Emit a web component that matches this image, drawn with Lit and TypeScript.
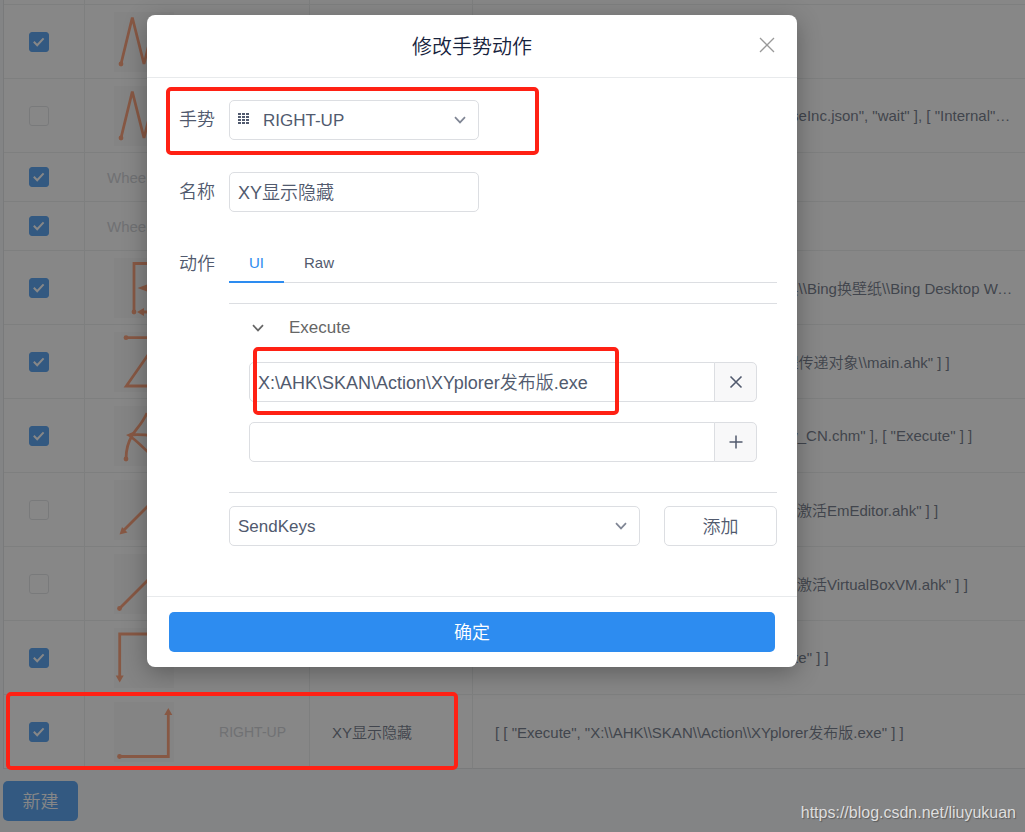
import { LitElement, html, svg, css, nothing } from "lit";
import { customElement, property } from "lit/decorators.js";

interface GestureRow {
  on: boolean;
  shape?: string;
  gesture?: string;
  name?: string;
  action: string;
}

const rows: GestureRow[] = [
  { on: true, shape: "zigzag", action: "" },
  {
    on: false,
    shape: "zigzag",
    action: '[ [ "Execute", "D:\\\\Tools\\\\AutoHotkey\\\\DatabaseInc.json", "wait" ], [ "Internal"…',
  },
  { on: true, gesture: "WheelUp", action: "" },
  { on: true, gesture: "WheelDown", action: "" },
  {
    on: true,
    shape: "hook",
    action: '[ [ "Execute", "D:\\\\AutoHotkey\\\\Scripts\\\\小工具\\\\Bing换壁纸\\\\Bing Desktop Wallpaper.exe" ] ]',
  },
  { on: true, shape: "zed", action: '[ [ "Execute", "D:\\\\AutoHotkey\\\\Scripts\\\\多进程传递对象\\\\main.ahk" ] ]' },
  {
    on: true,
    shape: "curve",
    action: '[ [ "Execute", "C:\\\\Tools\\\\v2\\\\Help\\\\AutoHotkey_CN.chm" ], [ "Execute" ] ]',
  },
  { on: false, shape: "downleft", action: '[ [ "Execute", "D:\\\\AutoHotkey\\\\Scripts\\\\Tools\\\\激活EmEditor.ahk" ] ]' },
  { on: false, shape: "upright", action: '[ [ "Execute", "D:\\\\AutoHotkey\\\\Scripts\\\\Tools\\\\激活VirtualBoxVM.ahk" ] ]' },
  { on: true, shape: "leftdown", action: '[ [ "Execute", "D:\\\\AutoHotkey\\\\Scripts\\\\Spy.exe" ] ]' },
  {
    on: true,
    shape: "rightup",
    gesture: "RIGHT-UP",
    name: "XY显示隐藏",
    action: '[ [ "Execute", "X:\\\\AHK\\\\SKAN\\\\Action\\\\XYplorer发布版.exe" ] ]',
  },
];

const shapes: Record<string, { line: string; dot?: [number, number]; head?: string }> = {
  zigzag: { line: "M7 52 18.3 5.5 30 52 41.5 5.5 53 52", dot: [7, 52] },
  hook: { line: "M20 54V5.500H46V30H32M46 54H28", dot: [20, 54], head: "M23.500 30 33 26.500V33.500ZM23 54 30 50V58Z" },
  zed: { line: "M12 5.700H46L12.300 54H49", dot: [12, 5.7] },
  curve: {
    line: "M12 53C12 46 14 36 18.500 29C22 23 28 18 33 7M16 29Q26 28 40 30M16 30Q24 36 40 52",
    dot: [12, 53],
    head: "M12 29 19 26V33Z",
  },
  downleft: { line: "M53 7 9 51", head: "M5.500 54.500 8 47 13.500 52.500Z" },
  upright: { line: "M5.500 54.500 53 7", dot: [5.5, 54.5] },
  leftdown: { line: "M54 6H5.700V49", head: "M5.700 54.500 1.700 47.500H9.700Z" },
  rightup: { line: "M5.500 54.500H54.300V12", dot: [5.5, 54.5], head: "M54.300 6 50.300 13H58.300Z" },
};

const chevron = html`<svg class="chevron" viewBox="0 0 12 8" width="12" height="8" aria-hidden="true">
  <path d="M1 1.200 6 6.400 11 1.200" fill="none" stroke="currentColor" stroke-width="1.700" />
</svg>`;

@customElement("gesture-table")
export class GestureTable extends LitElement {
  @property({ attribute: false }) rows: GestureRow[] = [];

  static styles = css`
    :host {
      display: block;
    }
    .grid {
      width: 100%;
      table-layout: fixed;
      border-collapse: separate;
      border-spacing: 0;
      border-left: 1px solid #dcdee2;
      background: #fff;
      font-size: 15px;
      color: #515a6e;
    }
    .pick {
      width: 81px;
    }
    .gesture {
      width: 225px;
    }
    .name {
      width: 163px;
    }
    th,
    td {
      box-sizing: border-box;
      padding: 0 6px 0 22px;
      text-align: left;
      font-weight: inherit;
      border-right: 1px solid #e8eaec;
      border-bottom: 1px solid #e8eaec;
      overflow: hidden;
      white-space: nowrap;
      text-overflow: ellipsis;
    }
    th {
      height: 5px;
    }
    td {
      height: 49px;
    }
    .tall td {
      height: 74px;
    }
    th:last-child,
    td:last-child {
      border-right: 0;
    }
    tr:last-child td {
      border-bottom-color: #dcdee2;
    }
    .check {
      display: grid;
      width: 20px;
      height: 20px;
      margin-left: 3px;
    }
    .check input,
    .check svg {
      grid-area: 1 / 1;
    }
    .check input {
      appearance: none;
      box-sizing: border-box;
      width: 20px;
      height: 20px;
      margin: 0;
      border: 1px solid #dcdee2;
      border-radius: 3px;
      background: #fff;
    }
    .check input:checked {
      border-color: #2d8cf0;
      background: #2d8cf0;
    }
    .check svg {
      visibility: hidden;
      pointer-events: none;
    }
    .check input:checked + svg {
      visibility: visible;
    }
    .trace {
      display: flex;
      align-items: center;
      justify-content: space-between;
      padding: 0 17px 0 7px;
    }
    .trace svg {
      display: block;
      background: #f8f8f8;
    }
    .faint {
      color: #c5c8ce;
    }
    .small {
      font-size: 14px;
    }
  `;

  private trace(id: string) {
    const s = shapes[id];
    return svg`<svg width="60" height="60" viewBox="0 0 60 60" aria-hidden="true">
      <path d=${s.line} fill="none" stroke="#ff8a58" stroke-width="2.800"></path>
      ${s.dot ? svg`<circle cx=${s.dot[0]} cy=${s.dot[1]} r="2.400" fill="#ff8a58"></circle>` : nothing}
      ${s.head ? svg`<path d=${s.head} fill="#ff8a58"></path>` : nothing}
    </svg>`;
  }

  render() {
    return html`<table class="grid">
      <thead>
        <tr>
          <th class="pick"></th>
          <th class="gesture"></th>
          <th class="name"></th>
          <th></th>
        </tr>
      </thead>
      <tbody>
        ${this.rows.map(
          (r) => html`<tr class=${r.shape ? "tall" : "slim"}>
            <td>
              <label class="check">
                <input type="checkbox" .checked=${r.on} aria-label="启用" />
                <svg width="20" height="20" viewBox="0 0 20 20" aria-hidden="true">
                  <path d="M4.800 9.800 8.200 13.200 14.600 6.400" fill="none" stroke="#fff" stroke-width="2"></path>
                </svg>
              </label>
            </td>
            <td>
              ${r.shape
                ? html`<div class="trace">${this.trace(r.shape)}<span class="faint small">${r.gesture ?? ""}</span></div>`
                : html`<span class="faint">${r.gesture}</span>`}
            </td>
            <td>${r.name ?? ""}</td>
            <td>${r.action}</td>
          </tr>`
        )}
      </tbody>
    </table>`;
  }
}

@customElement("gesture-dialog")
export class GestureDialog extends LitElement {
  static styles = css`
    :host {
      display: block;
      width: 650px;
      border-radius: 8px;
      background: #fff;
      color: #515a6e;
      font-size: 18px;
      box-shadow: 0 6px 24px rgba(0, 0, 0, 0.3);
    }
    * {
      box-sizing: border-box;
    }
    button,
    input,
    select {
      font: inherit;
      color: inherit;
      margin: 0;
    }
    .head {
      display: grid;
      grid-template-columns: 1fr auto 1fr;
      align-items: center;
      height: 63px;
      padding: 0 20px 2px;
      border-bottom: 1px solid #e8eaec;
    }
    .title {
      grid-column: 2;
      margin: 0;
      font-size: 20px;
      font-weight: inherit;
      color: #17233d;
    }
    .close {
      justify-self: end;
      display: grid;
      place-items: center;
      width: 20px;
      height: 20px;
      padding: 0;
      border: 0;
      background: none;
      color: #999;
    }
    .body {
      display: grid;
      gap: 32px;
      padding: 22px 20px 50px 32px;
    }
    .item {
      display: grid;
      grid-template-columns: 50px 1fr;
      align-items: start;
    }
    .label {
      line-height: 40px;
    }
    .field {
      width: 250px;
    }
    .box {
      width: 100%;
      height: 40px;
      padding: 0 8px 2px;
      border: 1px solid #dcdee2;
      border-radius: 5px;
      background: #fff;
      outline: none;
    }
    .select {
      display: grid;
      align-items: center;
      font-size: 17px;
    }
    .select > * {
      grid-area: 1 / 1;
    }
    .select .box {
      appearance: none;
      padding-bottom: 0;
    }
    .select .chevron {
      justify-self: end;
      margin-right: 13px;
      color: #808695;
      pointer-events: none;
    }
    .keypad {
      margin: 0 0 3px 9px;
      pointer-events: none;
    }
    .select .indent {
      padding-left: 33px;
    }
    .tabs {
      display: flex;
      height: 39px;
      border-bottom: 1px solid #dcdee2;
      font-size: 15px;
    }
    .tab {
      height: 39px;
      padding: 0 20px;
      border: 0;
      border-bottom: 2px solid transparent;
      background: none;
    }
    .active {
      color: #2d8cf0;
      border-bottom-color: #2d8cf0;
    }
    .panel {
      margin: 20px 0 13px;
      padding: 0 20px 30px;
      border-top: 1px solid #dcdee2;
      border-bottom: 1px solid #dcdee2;
    }
    .fold {
      display: flex;
      align-items: center;
      gap: 25px;
      width: 100%;
      height: 48px;
      padding: 0 3px;
      border: 0;
      background: none;
      color: #666;
      font-size: 17px;
    }
    .args {
      display: grid;
      gap: 20px;
      padding-top: 10px;
    }
    .arg {
      display: flex;
    }
    .arg .box {
      flex: 1;
      border-radius: 5px 0 0 5px;
    }
    .addon {
      display: grid;
      place-items: center;
      width: 43px;
      height: 40px;
      margin-left: -1px;
      padding: 0;
      border: 1px solid #dcdee2;
      border-radius: 0 5px 5px 0;
      background: #f8f8f9;
    }
    .append {
      display: grid;
      grid-template-columns: 1fr 113px;
      gap: 24px;
    }
    .foot {
      padding: 15px 22px;
      border-top: 1px solid #e8eaec;
    }
    .ok {
      width: 100%;
      height: 40px;
      padding: 0 0 2px;
      border: 0;
      border-radius: 5px;
      background: #2d8cf0;
      color: #fff;
    }
  `;

  render() {
    return html`
      <header class="head">
        <h2 class="title">修改手势动作</h2>
        <button class="close" aria-label="关闭">
          <svg width="16" height="16" viewBox="0 0 16 16">
            <path d="M1 1 15 15M15 1 1 15" stroke="currentColor" stroke-width="1.300" />
          </svg>
        </button>
      </header>
      <div class="body">
        <div class="item">
          <label class="label" for="gesture">手势</label>
          <div class="field select">
            <select id="gesture" class="box indent">
              <option>RIGHT-UP</option>
            </select>
            <svg class="keypad" width="12" height="11" viewBox="0 0 12 11" aria-hidden="true">
              ${[0, 4, 8].map((x) =>
                [0, 3, 6, 9].map((y) => svg`<rect x=${x} y=${y} width="3" height="2" fill="#515a6e"></rect>`)
              )}
            </svg>
            ${chevron}
          </div>
        </div>
        <div class="item">
          <label class="label" for="name">名称</label>
          <div class="field"><input id="name" class="box" type="text" value="XY显示隐藏" /></div>
        </div>
        <div class="item">
          <span class="label">动作</span>
          <div>
            <div class="tabs" role="tablist">
              <button class="tab active" role="tab" aria-selected="true">UI</button>
              <button class="tab" role="tab" aria-selected="false">Raw</button>
            </div>
            <section class="panel">
              <button class="fold" aria-expanded="true">${chevron}<span>Execute</span></button>
              <div class="args">
                <div class="arg">
                  <input class="box" type="text" aria-label="参数 1" value="X:\\AHK\\SKAN\\Action\\XYplorer发布版.exe" />
                  <button class="addon" aria-label="删除">
                    <svg width="14" height="14" viewBox="0 0 14 14">
                      <path d="M1.500 1.500 12.500 12.500M12.500 1.500 1.500 12.500" stroke="currentColor" stroke-width="1.600" />
                    </svg>
                  </button>
                </div>
                <div class="arg">
                  <input class="box" type="text" aria-label="参数 2" />
                  <button class="addon" aria-label="增加">
                    <svg width="14" height="14" viewBox="0 0 14 14">
                      <path d="M7 .5V13.500M.5 7H13.500" stroke="currentColor" stroke-width="1.500" />
                    </svg>
                  </button>
                </div>
              </div>
            </section>
            <div class="append">
              <div class="select">
                <select class="box" aria-label="动作类型">
                  <option>SendKeys</option>
                </select>
                ${chevron}
              </div>
              <button class="box">添加</button>
            </div>
          </div>
        </div>
      </div>
      <footer class="foot"><button class="ok">确定</button></footer>
    `;
  }
}

@customElement("app-root")
export class AppRoot extends LitElement {
  static styles = css`
    :host {
      display: block;
      position: relative;
      min-height: 100vh;
      overflow: hidden;
      background: #f5f7f9;
      font-family: "Liberation Sans", "Noto Sans CJK SC", sans-serif;
      font-weight: 350;
    }
    .page {
      padding-left: 3px;
    }
    .create {
      min-width: 75px;
      height: 40px;
      margin: 12px 0 11px;
      padding: 0 0 2px;
      border: 0;
      border-radius: 5px;
      background: #2d8cf0;
      color: #fff;
      font: inherit;
      font-size: 18px;
    }
    .mask {
      position: absolute;
      inset: 0;
      display: flex;
      justify-content: center;
      align-items: flex-start;
      padding: 15px 81px 0 0;
      background: rgba(55, 55, 55, 0.6);
    }
    .mark {
      position: absolute;
      box-sizing: border-box;
      border: 4px solid #ff2114;
      border-radius: 5px;
      pointer-events: none;
    }
    .mark-gesture {
      left: 166px;
      top: 87px;
      width: 373px;
      height: 68px;
    }
    .mark-path {
      left: 253px;
      top: 347px;
      width: 366px;
      height: 68px;
    }
    .mark-row {
      left: 6px;
      top: 692px;
      width: 452px;
      height: 78px;
    }
    .credit {
      position: absolute;
      right: 9px;
      bottom: 9px;
      font-size: 16px;
      line-height: 20px;
      color: #dedede;
      text-shadow: 1px 1px 1px rgba(0, 0, 0, 0.3);
    }
  `;

  render() {
    return html`
      <main class="page">
        <gesture-table .rows=${rows}></gesture-table>
        <button class="create">新建</button>
      </main>
      <div class="mask"><gesture-dialog role="dialog" aria-modal="true"></gesture-dialog></div>
      <div class="mark mark-gesture"></div>
      <div class="mark mark-path"></div>
      <div class="mark mark-row"></div>
      <span class="credit">https://blog.csdn.net/liuyukuan</span>
    `;
  }
}
